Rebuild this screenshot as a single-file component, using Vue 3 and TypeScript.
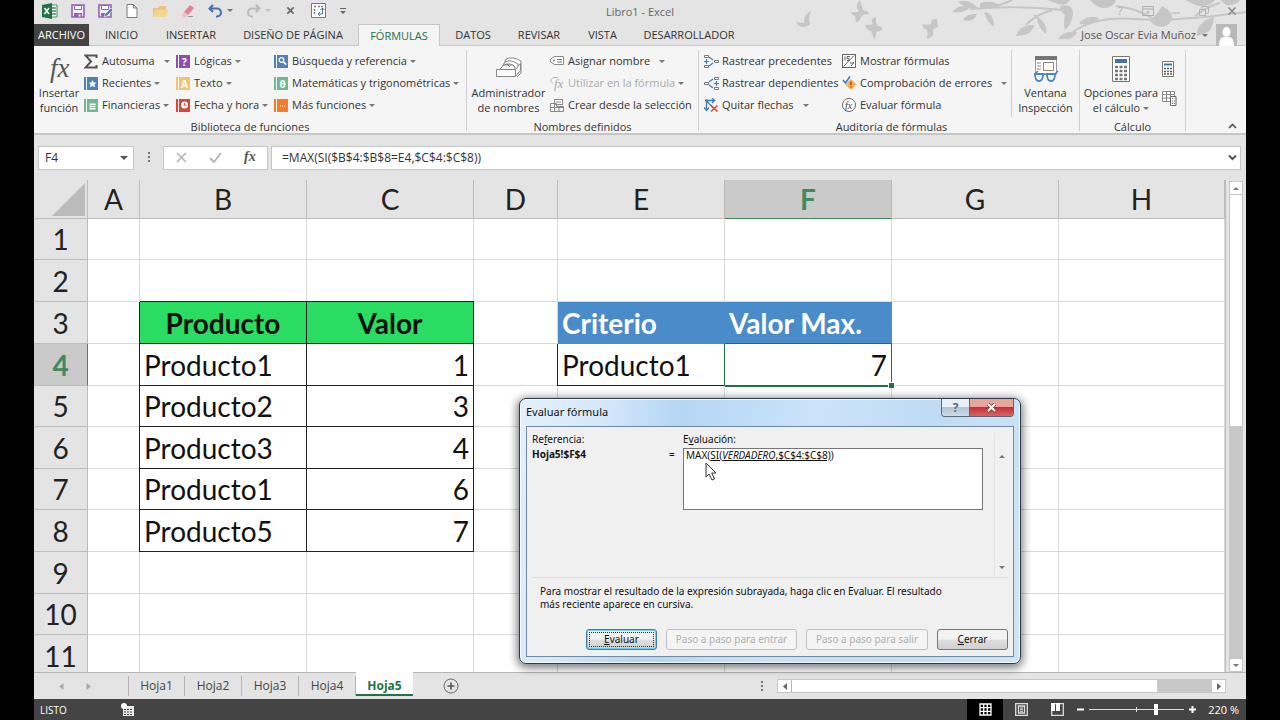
<script setup lang="ts">
import { ref } from 'vue'

interface Command {
  label: string
  icon: string
  menu?: boolean
  spaced?: boolean
  disabled?: boolean
}

const book = (color: string, mark: string) =>
  `<rect x="0" y="1" width="2" height="13" fill="${color}"/><rect x="3" y="1" width="11" height="13" fill="${color}"/>${mark}`

const bookLetter = (color: string, letter: string) =>
  book(color, `<text x="8.5" y="11.5" font-size="10" font-weight="700" font-family="Open Sans, sans-serif" fill="#fff" text-anchor="middle">${letter}</text>`)

const fx = (x: number, y: number, size: number, color: string) =>
  `<text x="${x}" y="${y}" font-size="${size}" font-style="italic" font-family="Liberation Serif, serif" fill="${color}">fx</text>`

const icons: Record<string, string> = {
  sum: '<path d="M12.500 4V1.500H1.500L7 7.500L1.500 13.500H12.500V11" fill="none" stroke="#555" stroke-width="2"/>',
  recent: book('#4f81b5', '<path d="M8.500 4l1.200 2.500 2.700.3-2 1.800.6 2.700-2.500-1.300-2.500 1.300.6-2.700-2-1.800 2.700-.3z" fill="#fff"/>'),
  money: book('#6fb892', '<path d="M5.500 5.500h6v1.500h-6zM5.500 7.800h6v1.500h-6zM5.500 10h6v1.500h-6z" fill="#fff"/>'),
  logic: bookLetter('#8a4fb0', '?'),
  text: bookLetter('#f0c470', 'A'),
  date: book('#d9463c', '<circle cx="8.500" cy="7" r="3.500" fill="#fff"/><path d="M8.500 5v2.200h2" fill="none" stroke="#d9463c"/>'),
  search: book('#4f81b5', '<circle cx="7.500" cy="6" r="2.300" fill="none" stroke="#fff" stroke-width="1.300"/><path d="M9.200 7.700l3 3" stroke="#fff" stroke-width="1.700"/>'),
  math: bookLetter('#6fb892', 'θ'),
  more: book('#f07f27', '<path d="M6 8h5" stroke="#fff" stroke-dasharray="1 1"/>'),
  tag: '<path d="M4.500 2.500h9v8h-9l-4-2.500v-3z" fill="#fff" stroke="#8a8a8a"/><circle cx="4" cy="6.500" r="1" fill="#4f81b5"/><path d="M7 5.500h5M7 8h5" stroke="#777"/>',
  use: '<path d="M3 1.500h5M3 1.500l-2 2v2l2 2" fill="none" stroke="#b5b5b5"/>' + fx(4, 12, 13, '#a8a8a8'),
  create: '<rect x="4.500" y="1.500" width="8" height="5" fill="#fff" stroke="#888"/><path d="M.500 5.500h6v3h7v5H.500zM.500 9.500h13M4.500 5.500v8M9 9v4" fill="none" stroke="#888"/><path d="M6 4h5" stroke="#888"/>',
  precedents: '<path d="M.500 1.500h4v2h-4zM.500 11.500h4v2h-4zM10.500 6.500h4v2h-4z" fill="#fff" stroke="#777"/><path d="M2.500 5v5M0 7.500h5M5 3l4 3M5 12l4-3" stroke="#3f7cbf" stroke-width="1.200"/>',
  dependents: '<path d="M.500 6.500h4v2h-4zM10.500 1.500h4v2h-4zM10.500 11.500h4v2h-4z" fill="#fff" stroke="#777"/><path d="M12.500 5v5M10 7.500h5M5 6l4-3M5 9l4 3" stroke="#3f7cbf" stroke-width="1.200"/>',
  remove: '<path d="M1 2.500h9M2.500 1v11M2.500 3l8 8M0 9.500l2.500 3 2.500-3M8 0l2.500 2.500-2.500 2.500" fill="none" stroke="#3f7cbf" stroke-width="1.300"/><path d="M7 7.500l6.500 6M13.500 7.500l-6.500 6" stroke="#d9463c" stroke-width="1.600"/>',
  show: '<rect x=".500" y=".500" width="13" height="13" fill="#fff" stroke="#666"/><path d="M3 2.500v4M1.500 12.500L12 1.500M5 2.500h3M5 2.500v2h2v2H5M8 9h4M9 12l3-4" fill="none" stroke="#666"/>',
  check: '<path d="M1 4l2.500 3L8 .500" fill="none" stroke="#3f7cbf" stroke-width="1.600"/><path d="M9 3.500l5 5-5 5-5-5z" fill="#f5b04c" stroke="#f5b04c" stroke-linejoin="round"/><path d="M9 5.500v3.500M9 10.200v1.300" stroke="#b5482a" stroke-width="1.500"/>',
  evaluate: '<circle cx="7" cy="7" r="6.500" fill="#fff" stroke="#666"/>' + fx(3, 10.5, 10, '#444'),
}

const library: Command[][] = [
  [
    { label: 'Autosuma', icon: 'sum', menu: true, spaced: true },
    { label: 'Recientes', icon: 'recent', menu: true },
    { label: 'Financieras', icon: 'money', menu: true },
  ],
  [
    { label: 'Lógicas', icon: 'logic', menu: true },
    { label: 'Texto', icon: 'text', menu: true },
    { label: 'Fecha y hora', icon: 'date', menu: true },
  ],
  [
    { label: 'Búsqueda y referencia', icon: 'search', menu: true },
    { label: 'Matemáticas y trigonométricas', icon: 'math', menu: true },
    { label: 'Más funciones', icon: 'more', menu: true },
  ],
]

const names: Command[] = [
  { label: 'Asignar nombre', icon: 'tag', menu: true, spaced: true },
  { label: 'Utilizar en la fórmula', icon: 'use', menu: true, disabled: true },
  { label: 'Crear desde la selección', icon: 'create' },
]

const audit: Command[][] = [
  [
    { label: 'Rastrear precedentes', icon: 'precedents' },
    { label: 'Rastrear dependientes', icon: 'dependents' },
    { label: 'Quitar flechas', icon: 'remove', menu: true, spaced: true },
  ],
  [
    { label: 'Mostrar fórmulas', icon: 'show' },
    { label: 'Comprobación de errores', icon: 'check', menu: true, spaced: true },
    { label: 'Evaluar fórmula', icon: 'evaluate' },
  ],
]

const tabs = ['ARCHIVO', 'INICIO', 'INSERTAR', 'DISEÑO DE PÁGINA', 'FÓRMULAS', 'DATOS', 'REVISAR', 'VISTA', 'DESARROLLADOR']
const activeTab = ref('FÓRMULAS')

const columns = ['A', 'B', 'C', 'D', 'E', 'F', 'G', 'H']
const cells: Record<string, string> = {
  B3: 'Producto', C3: 'Valor',
  B4: 'Producto1', C4: '1',
  B5: 'Producto2', C5: '3',
  B6: 'Producto3', C6: '4',
  B7: 'Producto1', C7: '6',
  B8: 'Producto5', C8: '7',
  E3: 'Criterio', F3: 'Valor Max.',
  E4: 'Producto1', F4: '7',
}

function cellClass(col: string, row: number): Record<string, boolean> {
  const inList = (col === 'B' || col === 'C') && row >= 3 && row <= 8
  return {
    green: inList && row === 3,
    boxed: (inList && row > 3) || (col === 'E' && row === 4),
    blue: (col === 'E' || col === 'F') && row === 3,
    number: (col === 'C' || col === 'F') && row > 3,
    selected: col === 'F' && row === 4,
  }
}

const sheets = ['Hoja1', 'Hoja2', 'Hoja3', 'Hoja4', 'Hoja5']
const activeSheet = ref('Hoja5')
const nameBox = ref('F4')
const formula = ref('=MAX(SI($B$4:$B$8=E4,$C$4:$C$8))')
const zoom = ref(71)
</script>

<template>
  <div class="screen">
    <div class="excel">
      <svg class="scenery" width="456" height="46" viewBox="0 0 456 46" aria-hidden="true">
        <g fill="#c6c6c6">
          <path d="M6 22L14 23Q13 15 21 11Q18 17 20 24Q18 27 12 27Q8 26 6 22z" />
          <path d="M61 12Q67 13 69 11Q64 6 70 0L73 10Q79 11 79 14Q72 14 71 17Q70 22 66 22L65 16Q62 15 61 12z" />
          <path d="M75 25Q81 25 83 24Q79 19 86 17Q85 22 88 26Q93 26 92 30Q88 32 86 32Q87 36 84 39Q82 34 81 31Q76 30 75 25z" />
          <path d="M132 24Q138 25 141 24Q140 19 147 19L148 27Q143 28 143 31Q145 36 137 39Q138 33 137 30Q133 29 132 24z" />
          <path d="M162 12Q168 4 180 7Q176 14 162 12zM173 20Q176 13 187 14Q184 23 173 20zM168 2Q178-2 188 8Q176 9 168 2zM190 3Q200 0 208 4Q202 11 190 8zM194 12Q204 13 204 27Q197 22 194 12z" />
          <path d="M226 36Q230 24 244 25Q242 36 226 36zM247 18Q258 22 256 34Q248 28 247 18zM270 6Q283 3 283 14Q282 24 275 30Q273 22 275 15Q270 12 270 6zM268 39Q274 30 287 32Q284 41 268 39zM258 0h22q-4 6-12 4z" />
          <path d="M290 22Q298 15 309 18Q304 26 290 24zM300 0h26Q322 9 312 8Q305 6 300 0zM360 20Q368 14 372 6Q384 12 382 20Q376 29 368 26Q362 25 360 20zM407 36Q406 22 424 17Q424 26 418 32zM395 0h30Q420 7 408 6zM430 0h20Q446 6 436 5z" />
        </g>
        <path d="M180 9Q225 5 272 10M236 25Q245 15 262 10M250 20L244 15M283 32Q305 16 345 19T456 12M326 6Q345 8 362 18M405 16Q418 6 430 3M205 6Q215 4 222 0" fill="none" stroke="#c6c6c6" stroke-width="2" />
      </svg>

      <header class="titlebar">
        <div class="quick">
          <svg width="16" height="16" viewBox="0 0 16 16" aria-label="Excel"><path d="M9 2h6v12H9z" fill="#fff" stroke="#3f8f5a" /><path d="M10 5h4M10 8h4M10 11h4" stroke="#3f8f5a" stroke-width="1.500" /><path d="M0 2l10-2v16L0 14z" fill="#217346" /><path d="M2.500 5l4.500 6M7 5l-4.500 6" stroke="#fff" stroke-width="1.500" /></svg>
          <button aria-label="Guardar"><svg width="14" height="14" viewBox="0 0 14 14"><path d="M1 1h12v12H1z" fill="#f4eef8" stroke="#9560b4" stroke-width="1.600" /><path d="M3.500 1.500h7v4h-7z" fill="#fff" stroke="#9560b4" /><path d="M3 9h8v4H3z" fill="#9560b4" /><path d="M7.500 10.500h2v2h-2z" fill="#fff" /></svg></button>
          <button aria-label="Guardar como"><svg width="15" height="14" viewBox="0 0 15 14"><path d="M1 1h12v12H1z" fill="#f4eef8" stroke="#9560b4" stroke-width="1.600" /><path d="M3.500 1.500h7v4h-7z" fill="#fff" stroke="#9560b4" /><path d="M3 9h4v4H3z" fill="#9560b4" /><path d="M6 13l1-3 6-6 2 2-6 6z" fill="#4f81b5" stroke="#fff" stroke-width=".600" /></svg></button>
          <button aria-label="Nuevo"><svg width="12" height="14" viewBox="0 0 12 14"><path d="M1 .500h6.500l3.500 3.500v9.500H1zM7.500 .500V4H11" fill="#fff" stroke="#7a7a7a" /></svg></button>
          <button aria-label="Abrir"><svg width="15" height="14" viewBox="0 0 15 14"><path d="M0 13V4h5l1-2h7v11z" fill="#efc276" /><path d="M0 13l2-7h13l-2 7z" fill="#f8d491" /></svg></button>
          <button aria-label="Borrar"><svg width="14" height="14" viewBox="0 0 14 14"><path d="M3 8l6-7 4 3-6 7z" fill="#ea7f8f" /><path d="M2.500 8.500l4 3-1 1.500h-3L1 11z" fill="#f6bac3" /><path d="M7 12.500h5" stroke="#999" /></svg></button>
          <button aria-label="Deshacer"><svg width="15" height="14" viewBox="0 0 15 14"><path d="M5 1L1.500 4.500L5 8M2 4.500h7a4 4 0 0 1 0 8H8" fill="none" stroke="#4472b0" stroke-width="2" /></svg><i class="caret"></i></button>
          <button aria-label="Rehacer" class="faint" disabled><svg width="15" height="14" viewBox="0 0 15 14"><path d="M10 1l3.500 3.500L10 8M13 4.500H6a4 4 0 0 0 0 8h1" fill="none" stroke="#bbb" stroke-width="2" /></svg><i class="caret"></i></button>
          <button aria-label="Cerrar libro" class="inset"><svg width="9" height="9" viewBox="0 0 10 10"><path d="M1.500 1.500l7 7M8.500 1.500l-7 7" stroke="#666" stroke-width="1.800" /></svg></button>
          <button aria-label="Cambiar tabla"><svg width="15" height="15" viewBox="0 0 15 15"><path d="M.500 .500h14v14H.500z" fill="#fff" stroke="#777" /><path d="M3 3.500h2M7 3.500h5M3.500 6v6" stroke="#777" stroke-width="1.500" stroke-dasharray="2 1" /><path d="M7 11h4.500V5M9 9l-2 2 2 2M9.500 7l2-2 2 2" fill="none" stroke="#4472b0" /></svg></button>
          <button aria-label="Personalizar"><svg width="8" height="8" viewBox="0 0 8 8"><path d="M1 1.500h6" stroke="#666" /><path d="M1 4h6L4 7z" fill="#666" /></svg></button>
        </div>
        <h1>Libro1 - Excel</h1>
        <div class="window-buttons">
          <button aria-label="Ayuda">?</button>
          <button aria-label="Opciones de cinta"><svg width="12" height="10" viewBox="0 0 12 10"><path d="M.500 .500h11v9H.500zM.500 3h11M6 8V5M4.500 6.500L6 5l1.500 1.500" fill="none" stroke="#b0b0b0" /></svg></button>
          <button aria-label="Minimizar"><svg width="10" height="10" viewBox="0 0 10 10"><path d="M1 7h8" stroke="#b5b5b5" /></svg></button>
          <button aria-label="Restaurar"><svg width="10" height="10" viewBox="0 0 10 10"><path d="M.500 3.500h6v6h-6zM3 3V.500h6.500V7H7" fill="none" stroke="#b5b5b5" /></svg></button>
          <button aria-label="Cerrar"><svg width="10" height="10" viewBox="0 0 10 10"><path d="M1.500 1.500l7 7M8.500 1.500l-7 7" stroke="#888" stroke-width="1.500" /></svg></button>
        </div>
      </header>

      <nav class="tabs">
        <button v-for="tab in tabs" :key="tab" :class="{ file: tab === 'ARCHIVO', active: tab === activeTab }" @click="activeTab = tab">{{ tab }}</button>
        <div class="user">
          <span>Jose Oscar Evia Muñoz</span><i class="caret"></i>
          <svg width="21" height="22" viewBox="0 0 21 22" aria-hidden="true"><path d="M0 0h21v22H0z" fill="#b9b9b9" /><path d="M3 22q0-9 5-9h5q5 0 5 9z" fill="#fff" /><ellipse cx="10.500" cy="8" rx="4" ry="5" fill="#fff" /></svg>
        </div>
      </nav>

      <section class="ribbon">
        <div class="group library">
          <div class="tools">
            <button class="big"><svg width="34" height="32" viewBox="0 0 34 32" aria-hidden="true"><text x="8" y="24" font-size="27" font-style="italic" font-family="Liberation Serif, serif" fill="#555">fx</text></svg><span>Insertar<br />función</span></button>
            <div v-for="(list, n) in library" :key="n" class="stack">
              <button v-for="c in list" :key="c.label" class="command"><svg width="15" height="15" viewBox="0 0 15 15" v-html="icons[c.icon]"></svg><span>{{ c.label }}</span><i v-if="c.menu" class="caret" :class="{ spaced: c.spaced }"></i></button>
            </div>
          </div>
          <h2>Biblioteca de funciones</h2>
        </div>
        <div class="group names">
          <div class="tools">
            <button class="big"><svg width="28" height="32" viewBox="0 0 28 32" aria-hidden="true"><g fill="#fff" stroke="#888"><path d="M7 16l4-10q6-3 15 2v12l-4 4" /><path d="M6 16l4-7q6-3 13 2v10" /><path d="M5 16l4-4q6-3 11 2v4" /><path d="M9 12h9l2 3M1.500 16.500h19v7h-19zM20.500 16.500l5-6v7l-5 6" /></g><path d="M12 11l3 3" stroke="#4472b0" /></svg><span>Administrador<br />de nombres</span></button>
            <div class="stack">
              <button v-for="c in names" :key="c.label" class="command" :disabled="c.disabled"><svg width="15" height="15" viewBox="0 0 15 15" v-html="icons[c.icon]"></svg><span>{{ c.label }}</span><i v-if="c.menu" class="caret" :class="{ spaced: c.spaced }"></i></button>
            </div>
          </div>
          <h2>Nombres definidos</h2>
        </div>
        <div class="group audit">
          <div class="tools">
            <div v-for="(list, n) in audit" :key="n" class="stack">
              <button v-for="c in list" :key="c.label" class="command"><svg width="15" height="15" viewBox="0 0 15 15" v-html="icons[c.icon]"></svg><span>{{ c.label }}</span><i v-if="c.menu" class="caret" :class="{ spaced: c.spaced }"></i></button>
            </div>
            <button class="big watch"><svg width="28" height="32" viewBox="0 0 28 32" aria-hidden="true"><path d="M3.500 3.500h21v18h-21z" fill="#fff" stroke="#999" /><path d="M3 3h22v4H3z" fill="#777" /><path d="M11.500 9.500h10v8h-10zM5 10h4M5 13h4M5 16h4" fill="none" stroke="#888" /><path d="M3 21h8q0 7-4 7t-4-7zM15 21h8q0 7-4 7t-4-7z" fill="#f6faff" stroke="#4a86c5" stroke-width="1.800" /><path d="M11 22q2-2 4 0M3 21l3-3M23 21l3-3" fill="none" stroke="#4a86c5" stroke-width="1.500" /></svg><span>Ventana<br />Inspección</span></button>
          </div>
          <h2>Auditoría de fórmulas</h2>
        </div>
        <div class="group calc">
          <div class="tools">
            <button class="big"><svg width="20" height="32" viewBox="0 0 20 32" aria-hidden="true"><path d="M1.500 3.500h17v25h-17z" fill="#fff" stroke="#777" /><path d="M4 6h12v4H4z" fill="#4472b0" /><path d="M4 14h12M4 18h12M4 22h12M4 26h12" stroke="#777" stroke-width="2.500" stroke-dasharray="3 1.500" /></svg><span>Opciones para<br />el cálculo <i class="caret"></i></span></button>
            <div class="pair">
              <button aria-label="Calcular ahora"><svg width="12" height="16" viewBox="0 0 12 16"><path d="M.500 .500h11v15H.500z" fill="#fff" stroke="#777" /><path d="M2 2.500h8v2H2z" fill="#4472b0" /><path d="M2 7.500h8M2 10.500h8M2 13h8" stroke="#555" stroke-width="1.500" stroke-dasharray="2 1" /></svg></button>
              <button aria-label="Calcular hoja"><svg width="15" height="15" viewBox="0 0 15 15"><path d="M.500 .500h12v10H.500zM.500 3.500h12M.500 7h12M4.500 .500v10M8.500 .500v10" fill="#fff" stroke="#888" /><path d="M8.500 5.500h5.500v9H8.500z" fill="#fff" stroke="#666" /><path d="M10 7.500h2.500M10 10h3M10 12.500h3" stroke="#666" stroke-dasharray="1 1" /></svg></button>
            </div>
          </div>
          <h2>Cálculo</h2>
        </div>
        <button class="collapse" aria-label="Contraer la cinta"><svg width="9" height="6" viewBox="0 0 9 6"><path d="M1 5l3.500-3.500L8 5" fill="none" stroke="#555" stroke-width="1.700" /></svg></button>
      </section>

      <section class="formula-bar">
        <div class="name-box"><input v-model="nameBox" aria-label="Cuadro de nombres" /><button aria-label="Lista de nombres"><i class="caret dark"></i></button></div>
        <i class="dots"></i>
        <div class="edit-buttons">
          <button aria-label="Cancelar"><svg width="11" height="11" viewBox="0 0 11 11"><path d="M1 1l9 9M10 1l-9 9" stroke="#b5b5b5" stroke-width="1.600" /></svg></button>
          <button aria-label="Introducir"><svg width="13" height="11" viewBox="0 0 13 11"><path d="M1 6l4 4 7-9" fill="none" stroke="#b5b5b5" stroke-width="1.900" /></svg></button>
          <button aria-label="Insertar función"><svg width="15" height="15" viewBox="0 0 15 15"><text x="2" y="11" font-size="14" font-weight="700" font-style="italic" font-family="Liberation Serif, serif" fill="#555">fx</text></svg></button>
        </div>
        <div class="formula"><input v-model="formula" aria-label="Barra de fórmulas" /><button aria-label="Expandir"><svg width="9" height="7" viewBox="0 0 9 7"><path d="M1 1.500l3.500 3.500L8 1.500" fill="none" stroke="#555" stroke-width="2" /></svg></button></div>
      </section>

      <main class="workspace">
        <div class="sheet">
          <table>
            <colgroup><col class="c-head" /><col class="c-a" /><col /><col /><col class="c-d" /><col /><col /><col /><col class="c-last" /></colgroup>
            <thead>
              <tr>
                <th class="corner"><svg width="33" height="33" viewBox="0 0 33 33" aria-hidden="true"><path d="M33 0v33H0z" fill="#bcbcbc" /></svg></th>
                <th v-for="c in columns" :key="c" scope="col" :class="{ current: c === 'F' }">{{ c }}</th>
              </tr>
            </thead>
            <tbody>
              <tr v-for="r in 11" :key="r">
                <th scope="row" :class="{ current: r === 4 }">{{ r }}</th>
                <td v-for="c in columns" :key="c" :class="cellClass(c, r)">{{ cells[c + r] }}</td>
              </tr>
            </tbody>
          </table>
        </div>
        <div class="v-scroll">
          <button aria-label="Subir"><i class="caret up"></i></button>
          <div class="track"><div class="thumb"></div></div>
          <button aria-label="Bajar"><i class="caret"></i></button>
        </div>
      </main>

      <footer class="sheet-tabs">
        <div class="arrows">
          <button aria-label="Hoja anterior"><svg width="5" height="7" viewBox="0 0 5 7"><path d="M4.500 0v7L0 3.500z" fill="#aaa" /></svg></button>
          <button aria-label="Hoja siguiente"><svg width="5" height="7" viewBox="0 0 5 7"><path d="M.500 0v7L5 3.500z" fill="#aaa" /></svg></button>
        </div>
        <button v-for="s in sheets" :key="s" class="sheet-tab" :class="{ active: s === activeSheet }" @click="activeSheet = s">{{ s }}</button>
        <button class="add" aria-label="Hoja nueva"><svg width="16" height="16" viewBox="0 0 16 16"><circle cx="8" cy="8" r="7" fill="none" stroke="#666" /><path d="M4.500 8h7M8 4.500v7" stroke="#555" stroke-width="1.600" /></svg></button>
        <i class="dots"></i>
        <div class="h-scroll">
          <button aria-label="Izquierda"><svg width="4" height="7" viewBox="0 0 4 7"><path d="M4 0v7L0 3.500z" fill="#666" /></svg></button>
          <div class="track"><div class="thumb"></div></div>
          <button aria-label="Derecha"><svg width="4" height="7" viewBox="0 0 4 7"><path d="M0 0v7l4-3.500z" fill="#666" /></svg></button>
        </div>
      </footer>

      <footer class="status">
        <span class="ready">LISTO</span>
        <svg width="13" height="13" viewBox="0 0 13 13" aria-hidden="true"><path d="M2 3h11v10H2z" fill="#e8e8e8" /><path d="M3 6.500h9M3 9h9M3 11.500h9" stroke="#444" stroke-dasharray="2 1" /><circle cx="3" cy="3" r="3" fill="#fff" /></svg>
        <div class="views">
          <button class="on" aria-label="Normal"><svg width="13" height="13" viewBox="0 0 13 13"><path d="M1 1h11v11H1zM1 4.700h11M1 8.300h11M4.700 1v11M8.300 1v11" fill="none" stroke="#fff" stroke-width="1.300" /></svg></button>
          <button aria-label="Diseño de página"><svg width="13" height="13" viewBox="0 0 13 13"><path d="M.700 .700h11.600v11.600H.700zM3.500 3h6v7h-6z" fill="none" stroke="#ddd" stroke-width="1.300" /><path d="M5 5h3M5 6.700h3M5 8.300h3" stroke="#ddd" /></svg></button>
          <button aria-label="Saltos de página"><svg width="13" height="13" viewBox="0 0 13 13"><path d="M.700 .700h11.600v11.600H.700z" fill="none" stroke="#ddd" stroke-width="1.300" /><path d="M0 0h4v8H0zM5 0h4v8H5z" fill="#fff" /></svg></button>
        </div>
        <button class="step" aria-label="Alejar"><svg width="7" height="7" viewBox="0 0 7 7"><path d="M0 3.500h7" stroke="#fff" stroke-width="2" /></svg></button>
        <input v-model="zoom" type="range" min="0" max="100" aria-label="Zoom" />
        <button class="step" aria-label="Acercar"><svg width="7" height="7" viewBox="0 0 7 7"><path d="M0 3.500h7M3.500 0v7" stroke="#fff" stroke-width="2" /></svg></button>
        <span class="percent">220 %</span>
      </footer>
    </div>

    <div class="dialog" role="dialog" aria-labelledby="dialog-title">
      <div class="dialog-title">
        <span id="dialog-title">Evaluar fórmula</span>
        <div class="dialog-buttons"><button aria-label="Ayuda">?</button><button class="close" aria-label="Cerrar"><svg width="11" height="9" viewBox="0 0 11 9"><path d="M2 1l7 7M9 1L2 8" stroke="#7a3030" stroke-width="3.600" /><path d="M2 1l7 7M9 1L2 8" stroke="#fff" stroke-width="2.200" /></svg></button></div>
      </div>
      <div class="client">
        <div class="evaluation">
          <div class="reference"><span>Re<u>f</u>erencia:</span><b>Hoja5!$F$4</b></div>
          <div class="equals">=</div>
          <div class="result"><span>E<u>v</u>aluación:</span><div class="expression">MAX(<u>SI(<em>VERDADERO</em>,$C$4:$C$8)</u>)</div></div>
          <div class="mini-scroll"><i class="caret up"></i><i class="caret"></i></div>
        </div>
        <p>Para mostrar el resultado de la expresión subrayada, haga clic en Evaluar. El resultado<br />más reciente aparece en cursiva.</p>
        <div class="actions">
          <button class="default"><span><u>E</u>valuar</span></button>
          <button class="enter" disabled>Paso a paso para entrar</button>
          <button class="leave" disabled>Paso a paso para salir</button>
          <button><u>C</u>errar</button>
        </div>
      </div>
      <svg class="pointer" width="13" height="19" viewBox="0 0 13 19" aria-hidden="true"><path d="M1 1v14l3-3 3 6 2.500-1-2.800-6H11z" fill="#fff" stroke="#333" /></svg>
    </div>
  </div>
</template>

<style>
body { margin: 0; background: #000; }
</style>

<style scoped>
* { box-sizing: border-box; }
.screen { position: relative; display: flex; height: 100vh; padding: 0 34px; background: #000; overflow: hidden; font: 11px/14px "Open Sans", "Noto Sans", sans-serif; color: #333; }
.excel { position: relative; flex: 1; min-width: 0; display: flex; flex-direction: column; background: #e4e4e4; }
button { display: flex; align-items: center; justify-content: center; padding: 0; border: 0; background: none; font: inherit; color: inherit; white-space: nowrap; }
input { font: inherit; color: inherit; border: 0; outline: 0; padding: 0; background: none; min-width: 0; }
svg { flex: none; display: block; }
h1, h2, p { margin: 0; font: inherit; }
.scenery { position: absolute; right: 0; top: 0; }
.caret { display: inline-block; flex: none; border: 3px solid transparent; border-top-color: #777; border-bottom: 0; }
.caret.dark { border-width: 4px; border-bottom: 0; border-top-color: #555; }
.caret.up { border-top: 0; border-bottom: 3px solid #777; }
.spaced { margin-left: 6px; }
.dots { width: 2px; height: 11px; background: repeating-linear-gradient(#777 0 2px, transparent 2px 4px); }

.titlebar { position: relative; display: flex; align-items: flex-start; justify-content: space-between; height: 24px; padding: 0 8px; flex: none; }
.quick { display: grid; grid-template-columns: 29px 27px 28px 27px 28px 27px 38px 38px 27px 28px 16px; align-items: center; height: 21px; }
.quick button { justify-content: flex-start; gap: 4px; }
.quick .inset { padding-left: 2px; }
.faint .caret { opacity: .3; }
.titlebar h1 { position: absolute; left: 50%; transform: translateX(-50%); font-size: 11px; line-height: 24px; color: #666; }
.window-buttons { display: grid; grid-template-columns: repeat(5, 28px); height: 21px; margin-right: -8px; color: #b0b0b0; }

.tabs { position: relative; display: grid; grid-template-columns: 55px 65px 74px 130px 82px 66px 66px 61px 112px 1fr; height: 22px; flex: none; font-size: 11px; border-bottom: 1px solid #c6c6c6; }
.tabs button.file { background: #444; color: #fff; }
.tabs button.active { background: #f5f5f5; border: 1px solid #c6c6c6; border-bottom: 0; margin-bottom: -1px; color: #217346; }
.user { display: flex; align-items: center; justify-content: flex-end; gap: 6px; padding-right: 9px; color: #555; }
.user svg { margin-left: 2px; }

.ribbon { display: flex; height: 89px; flex: none; padding-top: 4px; background: #f5f5f5; border-bottom: 2px solid #c6c6c6; position: relative; }
.group { display: flex; flex-direction: column; height: 81px; border-right: 1px solid #d0d0d0; flex: none; }
.library { width: 433px; }
.names { width: 232px; }
.audit { width: 381px; padding-left: 5px; }
.calc { width: 106px; }
.tools { display: flex; height: 67px; flex: none; }
.group h2 { text-align: center; line-height: 20px; height: 14px; color: #333; }
.stack { display: grid; grid-template-rows: repeat(3, 22px); }
.command { justify-content: flex-start; gap: 3px; }
.command:disabled { color: #aaa; }
.big { flex-direction: column; line-height: 15px; }
.big > span { text-align: center; }
.big .caret { vertical-align: middle; }
.library .tools { display: grid; grid-template-columns: 50px 92px 98px 1fr; }
.names .tools { display: grid; grid-template-columns: 83px 1fr; }
.audit .tools { display: grid; grid-template-columns: 138px 169px 1fr; }
.calc .tools { display: grid; grid-template-columns: 82px 1fr; }
.watch { border-left: 1px solid #d0d0d0; }
.pair { display: grid; grid-template-rows: 37px 22px; }
.pair button { justify-content: flex-start; }
.collapse { position: absolute; right: 9px; bottom: 4px; }

.formula-bar { display: flex; align-items: center; gap: 4px; height: 45px; flex: none; padding: 0 5px 0 4px; font-size: 12px; }
.formula-bar > div { display: flex; height: 24px; background: #fff; border: 1px solid #c6c6c6; }
.name-box { width: 96px; padding: 0 5px 0 6px; }
.name-box input, .formula input { flex: 1; }
.formula-bar .dots { margin: 0 9px 0 10px; }
.formula-bar > .edit-buttons { display: grid; grid-template-columns: 1fr 1fr 1fr; width: 105px; margin-right: -1px; }
.formula { flex: 1; padding: 0 3px 0 10px; }

.workspace { display: flex; flex: 1; min-height: 0; }
.sheet { flex: 1; min-width: 0; overflow: hidden; background: #fff; }
table { width: 100%; table-layout: fixed; border-collapse: separate; border-spacing: 0; font: 28px/34px Lato, "Open Sans", sans-serif; color: #111; }
col { width: 167px; }
col.c-head { width: 54px; }
col.c-a { width: 52px; }
col.c-d { width: 84px; }
col.c-last { width: auto; }
th, td { padding: 0; border-right: 1px solid #d9d9d9; border-bottom: 1px solid #d9d9d9; white-space: nowrap; }
th { background: #e4e4e4; font-weight: 400; color: #222; border-color: #bcbcbc; }
thead th { height: 39px; }
.corner svg { margin: 0 2px 0 auto; }
thead .current { background: #cacaca; color: #3f8a5f; font-weight: 700; border-bottom-color: #3f8a5f; }
tbody .current { background: #cacaca; color: #3f8a5f; font-weight: 700; border-right-color: #3f8a5f; }
tbody tr { height: 42px; }
tbody tr:nth-child(3n+1) { height: 41px; }
tbody tr:nth-child(4) { height: 42px; }
tbody tr:nth-child(5) { height: 41px; }
td { padding: 0 4px; }
td.number { text-align: right; }
td.green { background: #2bdc62; font-weight: 700; text-align: center; border-color: #222; box-shadow: 0 -1px #222, -1px 0 #222; }
td.boxed { border-color: #222; box-shadow: -1px 0 #222; }
td.blue { background: #4a8bca; border-color: #4a8bca; font-weight: 700; color: #fff; }
td.selected { position: relative; border-color: #217346; box-shadow: 0 -1px #217346, -1px 0 #217346, 0 1px #217346; }
td.selected::after { content: ""; position: absolute; right: -3px; bottom: -3px; width: 5px; height: 5px; background: #217346; border: 1px solid #fff; border-width: 1px 0 0 1px; }

.v-scroll { width: 21px; display: flex; flex-direction: column; padding: 1px 3px 0; border-left: 1px solid #bcbcbc; }
.v-scroll button { height: 14px; background: #fff; border: 1px solid #c6c6c6; flex: none; }
.v-scroll .track { flex: 1; background: #c8c8c8; }
.v-scroll .thumb { height: 50%; background: #fff; border: 1px solid #c6c6c6; border-top: 0; }

.sheet-tabs { display: flex; align-items: center; height: 27px; flex: none; border-top: 1px solid #b5b5b5; font-size: 12px; color: #444; padding-right: 20px; }
.arrows { display: flex; width: 94px; gap: 22px; padding-left: 25px; }
.sheet-tab { width: 57px; height: 20px; border-right: 1px solid #b5b5b5; }
.sheet-tab.active { align-self: flex-start; height: 24px; margin-top: -1px; padding-top: 5px; background: #fff; border: 0; border-bottom: 2px solid #217346; color: #217346; font-weight: 700; }
.arrows + .sheet-tab { border-left: 1px solid #b5b5b5; }
.add { margin: 0 auto 0 30px; }
.h-scroll { display: flex; width: 449px; height: 14px; margin-left: 14px; border: 1px solid #c6c6c6; background: #c8c8c8; }
.h-scroll button { width: 13px; background: #fff; }
.h-scroll .track { flex: 1; }
.h-scroll .thumb { width: 87%; height: 100%; background: #fff; border-left: 1px solid #b5b5b5; }

.status { display: flex; align-items: center; height: 21px; flex: none; background: #444; color: #fff; font-size: 10px; padding: 0 7px 0 6px; }
.ready { width: 81px; }
.views { display: grid; grid-template-columns: repeat(3, 36px); height: 21px; margin-left: auto; }
.on { background: #000; }
.step { margin: 0 2px; }
.status input { appearance: none; width: 95px; height: 13px; background: linear-gradient(#ddd, #ddd) 50% 50% / 1px 5px no-repeat, linear-gradient(#ddd, #ddd) 50% 50% / 100% 1px no-repeat; margin: 0 3px; }
.status input::-webkit-slider-thumb { appearance: none; width: 4px; height: 11px; background: #fff; }
.percent { margin-left: 10px; font-size: 11px; }

.dialog { position: absolute; left: 519px; top: 398px; width: 502px; padding: 0 6px 6px; border: 1px solid #2b3a48; border-radius: 7px; background: linear-gradient(100deg, #e3f0fb 0, #d5e8f9 15%, #b4d6f5 30%, #cbe3fa 55%, #bfdcf4 75%, #cfe5f7 100%); box-shadow: inset 0 0 0 1px #f2f9ff, 0 2px 9px 2px rgba(0, 0, 0, .5); color: #111; font: 10px/13px "Noto Sans", "Open Sans", sans-serif; }
.dialog-title { display: flex; justify-content: space-between; height: 27px; font-size: 11px; line-height: 26px; }
.dialog-buttons { display: flex; height: 18px; border: 1px solid #586878; border-top: 0; border-radius: 0 0 4px 4px; overflow: hidden; }
.dialog-buttons button { width: 27px; background: linear-gradient(#e8eff7 45%, #b4c4d6 50%, #cddbe9); font-size: 12px; font-weight: 700; color: #667; }
.dialog-buttons .close { width: 44px; border-left: 1px solid #586878; background: linear-gradient(#e9a49c 45%, #c4303a 50%, #d8645c); }
.client { background: #f0f0f0; border: 1px solid #6f8ba3; padding: 6px 5px; }
.evaluation { display: grid; grid-template-columns: 137px 14px 300px 1fr; height: 145px; border-bottom: 1px solid #ddd; }
.reference, .result { display: flex; flex-direction: column; gap: 2px; }
.equals { padding-top: 15px; }
.expression { height: 62px; background: #fff; border: 1px solid #777; padding: 0 2px; }
.mini-scroll { display: flex; flex-direction: column; justify-content: space-between; align-items: center; margin-left: 11px; padding: 22px 0 8px; border-left: 1px solid #e4e4e4; }
.client p { padding: 7px 0 0 8px; height: 51px; white-space: nowrap; }
.actions { display: flex; justify-content: flex-end; gap: 9px; }
.actions button { width: 71px; height: 21px; border: 1px solid #777; border-radius: 3px; background: linear-gradient(#f3f3f3 48%, #dedede 52%, #d0d0d0); }
.actions .enter { width: 131px; }
.actions .leave { width: 122px; }
.actions button:disabled { color: #b0b0b0; border-color: #c0c0c0; background: #f4f4f4; }
.actions .default { border-color: #3c7fa8; box-shadow: inset 0 0 0 1px #6cd0ee; padding: 2px; }
.default span { flex: 1; border: 1px dotted #333; }
.pointer { position: absolute; left: 185px; top: 63px; }
</style>
